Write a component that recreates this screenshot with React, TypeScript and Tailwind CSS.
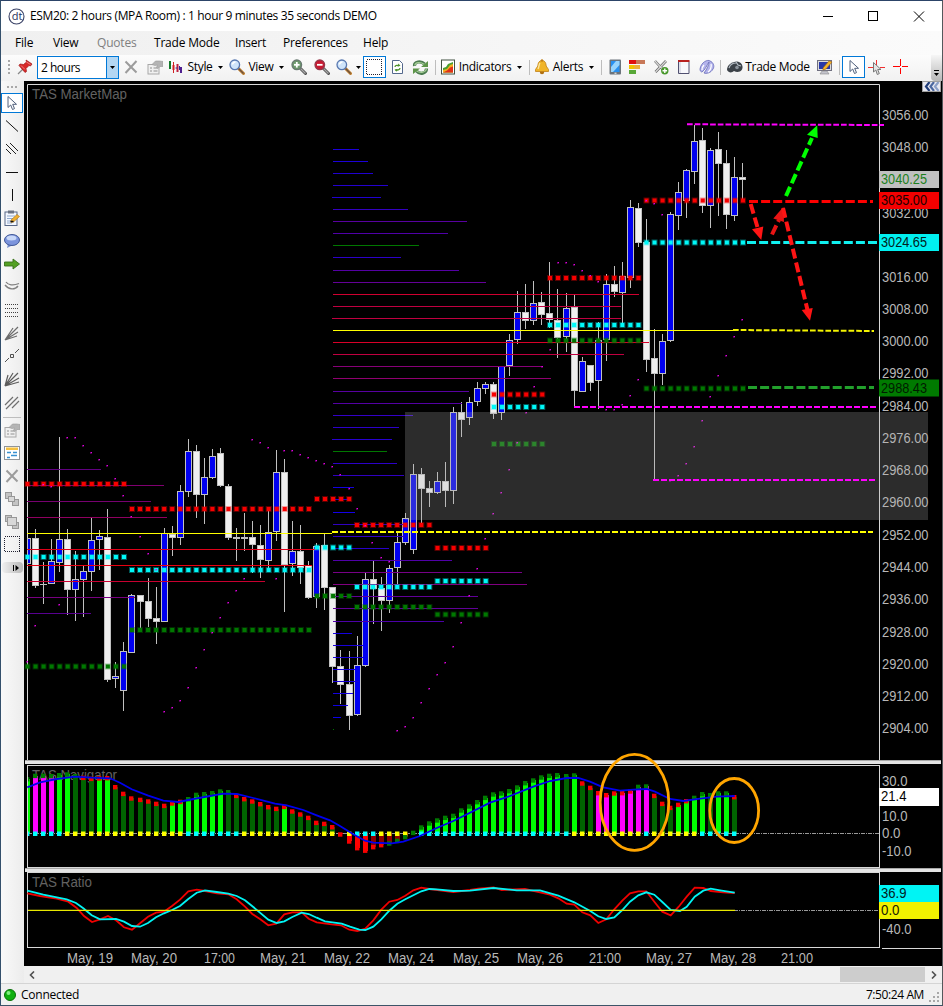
import React from 'react';
import { clsx } from 'clsx';

type Candle = [x: number, high: number, top: number, bottom: number, low: number, kind: 'b' | 'w'];

const UI_FONT = "font-['Open_Sans','Noto_Sans',sans-serif]";

const CANDLES: Candle[] = [
  [27, 538, 538, 564, 564, 'b'], [35, 529, 538, 586, 588, 'w'], [43, 562, 584, 585, 604, 'w'], [51, 539, 561, 584, 584, 'b'],
  [59, 437, 539, 563, 572, 'b'], [67, 529, 539, 590, 615, 'w'], [75, 551, 579, 590, 621, 'b'], [83, 566, 571, 580, 617, 'b'],
  [91, 518, 540, 572, 591, 'b'], [99, 530, 536, 540, 570, 'b'], [107, 509, 537, 680, 682, 'w'], [115, 662, 676, 679, 688, 'b'],
  [123, 642, 651, 691, 711, 'b'], [131, 594, 595, 653, 653, 'b'], [140, 595, 595, 602, 629, 'w'], [148, 578, 601, 619, 627, 'w'],
  [156, 587, 618, 622, 644, 'w'], [164, 528, 533, 622, 622, 'b'], [172, 526, 534, 538, 556, 'w'], [180, 485, 491, 538, 545, 'b'],
  [188, 439, 451, 492, 497, 'b'], [196, 445, 451, 495, 518, 'w'], [204, 458, 477, 495, 524, 'b'], [212, 449, 456, 478, 479, 'b'],
  [220, 448, 453, 486, 487, 'w'], [228, 484, 486, 538, 540, 'w'], [236, 528, 537, 539, 561, 'w'], [244, 513, 537, 539, 551, 'w'],
  [252, 521, 537, 545, 573, 'w'], [260, 525, 545, 560, 578, 'w'], [268, 511, 532, 561, 568, 'b'], [276, 450, 472, 532, 541, 'b'],
  [284, 459, 472, 565, 612, 'w'], [292, 521, 551, 564, 576, 'b'], [300, 525, 551, 568, 584, 'w'], [308, 561, 565, 598, 599, 'w'],
  [316, 543, 546, 597, 608, 'b'], [324, 534, 545, 588, 610, 'w'], [332, 587, 587, 667, 683, 'w'], [340, 650, 666, 685, 704, 'w'],
  [349, 651, 684, 716, 730, 'w'], [357, 636, 665, 715, 716, 'b'], [365, 573, 579, 666, 667, 'b'], [373, 561, 579, 589, 624, 'w'],
  [381, 577, 588, 601, 631, 'w'], [389, 565, 568, 601, 613, 'b'], [397, 533, 542, 568, 584, 'b'], [405, 513, 518, 543, 545, 'b'],
  [413, 464, 474, 550, 554, 'b'], [421, 468, 474, 489, 524, 'w'], [429, 481, 488, 493, 507, 'w'], [437, 472, 481, 493, 494, 'b'],
  [445, 462, 481, 491, 507, 'w'], [453, 407, 412, 491, 504, 'b'], [461, 402, 412, 420, 437, 'w'], [469, 397, 402, 418, 425, 'b'],
  [477, 382, 388, 402, 406, 'b'], [485, 382, 384, 389, 394, 'b'], [493, 382, 384, 414, 419, 'w'], [501, 366, 366, 413, 420, 'b'],
  [509, 334, 340, 366, 376, 'b'], [517, 291, 312, 340, 344, 'b'], [525, 284, 312, 321, 329, 'w'], [533, 281, 303, 321, 325, 'b'],
  [541, 292, 302, 315, 325, 'w'], [549, 262, 313, 320, 328, 'w'], [557, 289, 320, 338, 358, 'w'], [566, 293, 308, 337, 352, 'b'],
  [574, 295, 307, 391, 408, 'w'], [582, 357, 361, 392, 392, 'b'], [590, 365, 365, 383, 391, 'w'], [598, 322, 340, 381, 409, 'b'],
  [606, 274, 284, 340, 361, 'b'], [614, 266, 284, 292, 297, 'w'], [622, 262, 276, 293, 325, 'b'], [630, 200, 207, 278, 288, 'b'],
  [638, 203, 208, 243, 247, 'w'], [646, 219, 242, 360, 372, 'w'], [654, 329, 358, 374, 479, 'w'], [662, 334, 341, 374, 385, 'b'],
  [670, 212, 214, 341, 342, 'b'], [678, 182, 192, 216, 230, 'b'], [686, 169, 170, 201, 218, 'b'], [694, 125, 141, 172, 184, 'b'],
  [702, 128, 140, 206, 213, 'w'], [710, 148, 150, 206, 228, 'b'], [718, 132, 149, 164, 216, 'w'], [726, 150, 163, 215, 229, 'w'],
  [734, 157, 177, 216, 221, 'b'], [742, 163, 177, 180, 199, 'w'],
];

// volume profile rows: x1, x2, y, colour
const PROFILE: [number, number, number, string][] = [
  [27, 101, 469, '#600080'], [27, 164, 485, '#800070'], [27, 151, 501, '#780070'], [27, 167, 517, '#900060'],
  [27, 317, 549, '#e00018'], [27, 312, 565, '#e80010'], [27, 265, 581, '#c80030'], [27, 135, 597, '#780080'], [27, 91, 613, '#580090'],
  [333, 359, 149, '#1c00d8'], [333, 368, 161, '#1c00d8'], [333, 373, 173, '#2000d0'], [333, 388, 185, '#2400d0'],
  [332, 381, 197, '#2000d0'], [333, 408, 209, '#3400c0'], [333, 467, 221, '#5800a0'], [333, 448, 233, '#5000a8'],
  [333, 419, 245, '#007800'], [333, 401, 257, '#2c00c8'], [333, 459, 270, '#5400a4'], [333, 486, 282, '#640098'],
  [333, 639, 294, '#d00030'], [333, 621, 306, '#c00040'], [332, 621, 318, '#c00040'], [333, 649, 342, '#d80028'],
  [333, 624, 354, '#c00040'], [333, 543, 366, '#880078'], [333, 551, 378, '#900070'],
  [333, 469, 391, '#5800a0'], [333, 462, 403, '#5400a4'], [333, 413, 415, '#3400c8'], [333, 399, 427, '#2c00c8'],
  [332, 392, 439, '#2800d0'], [333, 387, 451, '#007800'], [333, 397, 463, '#2c00c8'], [333, 404, 475, '#3000c0'],
  [333, 354, 487, '#1400e0'], [333, 350, 499, '#1000e0'], [333, 355, 512, '#1400e8'], [333, 403, 524, '#3000c0'],
  [333, 405, 536, '#3000c0'], [333, 389, 548, '#2800c8'], [333, 452, 560, '#5000a8'], [333, 522, 572, '#780088'],
  [333, 527, 584, '#800080'], [333, 478, 596, '#600098'], [333, 478, 608, '#600098'], [333, 444, 621, '#4c00a8'],
  [333, 352, 633, '#1400e0'], [333, 363, 645, '#1800d8'], [333, 363, 657, '#1800d8'], [333, 355, 669, '#1400e0'],
  [333, 359, 681, '#1800d8'], [333, 353, 693, '#1400e0'], [333, 348, 705, '#1000e0'], [333, 341, 717, '#0c00e8'], [333, 334, 729, '#007800'],
];

// market map levels: first x, number of squares, y, colour
const RED = '#f80000';
const CYAN = '#00f8f8';
const GREEN = '#007800';
const LEVELS: [number, number, number, string][] = [
  [27.5, 13, 484, RED], [27.5, 13, 557, CYAN], [27.5, 13, 666.5, GREEN],
  [132, 23, 509, RED], [132, 23, 570, CYAN], [132, 23, 630, GREEN],
  [317, 5, 499, RED], [317, 5, 547.5, CYAN], [317, 5, 596, GREEN],
  [357, 10, 525, RED], [357, 10, 587, CYAN], [357, 10, 607, GREEN],
  [437.5, 7, 548, RED], [437.5, 7, 581, CYAN], [437.5, 7, 614.5, GREEN],
  [494, 7, 394.5, RED], [494, 7, 407, CYAN], [494, 7, 444, GREEN],
  [550, 12, 278, RED], [550, 12, 325, CYAN], [550, 12, 340.5, GREEN],
  [646.5, 13, 200.5, RED], [646.5, 13, 242.5, CYAN], [646.5, 13, 388.5, GREEN],
];

const SAR: [number, number][] = [
  [67, 437], [75, 437], [83, 445], [91, 452], [99, 459], [107, 465], [115, 478], [123, 495], [131, 516], [140, 536], [148, 553],
  [156, 569], [252, 439], [260, 442], [268, 447], [284, 450], [292, 450], [300, 454], [308, 457], [316, 460], [324, 463],
  [59, 604], [35, 625], [27, 661], [276, 578], [244, 578], [236, 590], [228, 602], [220, 617], [212, 632], [204, 649], [196, 667],
  [188, 687], [180, 700], [172, 707], [164, 711], [43, 484], [51, 486], [332, 466], [340, 474], [349, 488], [357, 508], [365, 525],
  [372, 542], [381, 557], [389, 561], [397, 730], [405, 726], [413, 717], [421, 702], [429, 688], [437, 674], [445, 662],
  [453, 646], [461, 622], [469, 595], [477, 568], [485, 538], [493, 513], [501, 492], [509, 469], [517, 442], [526, 412],
  [534, 386], [606, 409], [614, 409], [622, 404], [630, 395], [638, 379], [542, 366], [550, 349], [558, 262], [566, 262], [574, 264],
  [582, 270], [590, 275], [598, 281], [646, 200], [654, 203], [662, 214], [742, 319], [734, 336], [726, 355], [718, 375],
  [670, 480], [678, 475], [686, 463], [694, 446], [702, 420], [710, 396],
];

// y of the marker, then marker / bar / base colour codes
const NAVIGATOR: [number, string][] = [
  [779, 'gLc'], [775.7, 'gMc'], [775.7, 'gMc'], [776, 'gMc'], [775, 'gLc'], [774.3, 'gLy'], [776, 'gDy'], [777.7, 'rDy'],
  [778.7, 'rDy'], [778.3, 'rLy'], [778, 'rLy'], [787, 'rDy'], [793.7, 'rDy'], [798.3, 'rDy'], [799.7, 'rDy'], [801.3, 'rDy'],
  [803.7, 'rDy'], [805.7, 'rDy'], [803.3, 'rLy'], [801.7, 'rLy'], [799, 'gLc'], [794.7, 'gLc'], [794, 'gLc'], [793, 'gLc'],
  [791.3, 'gLc'], [792, 'gDc'], [795.7, 'rDc'], [799, 'rDy'], [801.3, 'rDy'], [804, 'rDy'], [807, 'rDy'], [808.7, 'rDy'],
  [806.7, 'rLy'], [811.3, 'rDy'], [814.3, 'rDy'], [817.7, 'rDy'], [822.7, 'rDy'], [823.7, 'rDy'], [827, 'rDy'], [834.3, 'rRn'],
  [841.3, 'rRy'], [848, 'rRc'], [850.5, 'rRc'], [847, 'rKc'], [845, 'rKy'], [843.3, 'gKy'], [840.7, 'gKy'], [837, 'gKy'],
  [832.7, 'gDn'], [827.3, 'gLc'], [823.3, 'gLc'], [820.3, 'gLc'], [817.7, 'gLc'], [815.7, 'gLc'], [810.3, 'gLc'], [806.3, 'gLc'],
  [802, 'gLc'], [797.7, 'gLc'], [794.3, 'gLc'], [793.3, 'gLc'], [791, 'gLc'], [787.3, 'gLc'], [783, 'gLc'], [780.3, 'gLc'],
  [777.3, 'gLc'], [775.7, 'gLc'], [775, 'gLc'], [776, 'gDc'], [775.3, 'gLy'], [783.3, 'rDy'], [787.7, 'rDy'], [793, 'rMy'],
  [795, 'rMy'], [793.3, 'rLy'], [793, 'rMy'], [791.3, 'rMy'], [786.7, 'gMy'], [786.3, 'gMc'], [795.7, 'rDy'], [803.7, 'rDy'],
  [807.7, 'rDy'], [804.7, 'rLy'], [801, 'rLy'], [797.7, 'gLy'], [794, 'gLc'], [795, 'gDc'], [793.3, 'gLc'], [793.3, 'gLc'], [797, 'rDc'],
];

const NAV_COLORS: Record<string, string> = {
  g: '#007c00', r: '#f80000', L: '#00ff00', D: '#006400', M: '#ff00ff', R: '#ff0000', K: '#8b0000', c: '#00ffff', y: '#ffff00', n: 'none',
};

const NAV_LINE =
  '27.3,787.3 40,782.3 56.7,779 75,776.7 91.7,777.7 110,778.3 120,782.7 131.7,789.3 148.3,795.7 163.3,800.7 178.3,802 193.3,799 210,796 223.3,793.7 236.7,794 253.3,798 275,803.7 286.7,805.3 303.3,810 316.7,815.3 330,820.3 340,826 353.3,834.3 365,840.7 373.3,842.7 391.7,843.3 403.3,841.7 420,836 436.7,828 453.3,821 470,812.7 490,802.7 510,796 533.3,786.7 550,781 566.7,778 578.3,778 590,781.7 603.3,787.3 620,790.7 633.3,789.7 646.7,789 655,791.7 670,799 683.3,801 700,798.7 716.7,796.7 734.7,796';

const RATIO_RED =
  '27.3,893.3 40,896 56.7,898.7 68.3,901.7 76.7,908 84,916 92,922 100,919.3 108,916 116,920.3 124,927.3 132,929.7 140,923.3 148,916.7 156,912.7 164,911.7 172,906 180,899.7 188.3,891.3 196.7,889.7 205,891 216.7,893.3 228.3,894.3 236.7,899.3 245,906.7 252.3,914 260.3,919.3 268.3,925.3 276.3,923.7 284.3,914.3 292.3,912.3 301.7,912.3 308.7,918.7 316.7,922.3 331.7,924.3 341,925.3 349.3,929.7 357.3,931 365.3,928.7 373.3,920.3 381.3,909.7 389.3,901.7 397.3,900 405.3,895.7 413.3,890.3 421.3,887.7 429.3,889 453.3,892 470,890 478.3,888.7 493.7,887.3 501.7,890 525,889 540,892.3 550,894.7 558.3,898.3 566.7,903.7 574.3,904.7 582.3,912.3 590.3,915.3 598.3,923 606.3,919.3 614.3,909.3 622.3,900.7 630,893.3 638.3,891.3 646.3,891.3 654.3,901.7 662.3,911.7 670.7,915.3 678.7,906.7 686.7,896.7 694.7,887.7 703.3,888 710.7,891 723.3,892.3 734.7,893';

const RATIO_CYAN =
  '27.3,890.7 43.3,894.7 66.7,899.3 76,903 83.3,908.3 91.7,915.3 100,919.3 116,919 124,921.7 132,926 140,926.7 148,923 156,917.3 164,913.3 172,910 180,906 188.3,899 196.7,892.7 205,890.3 216.7,892 228.3,893.7 236.7,896 245,900.3 253.3,907 268.3,919.7 276.7,923 284.3,921.3 292.3,917 301.7,912.7 308.7,914 316.7,917.7 325,921.3 341.7,923.7 350,926.7 359.3,929.7 365.3,930 373.3,926.7 381.3,919.3 389.3,910.7 397.3,903.7 405.3,899.3 421.3,891.3 429.3,889 436.7,889.3 453.3,891 470,890.7 493.3,888 516.7,890.3 540,890.3 558.3,895.7 574.3,902.3 590.3,911 598.3,916.3 606.3,919 614.3,917.3 622.3,910 630,901.7 638.3,895.3 646.3,892.3 654.3,894.7 662.3,902 670.7,910 680,911 686.7,906.7 694.7,896.7 703.3,890.7 710.7,888.7 720,890.3 734.7,892.7';

const PRICES: [string, number][] = [
  ['3056.00', 115], ['3048.00', 147], ['3032.00', 212.5], ['3016.00', 277], ['3008.00', 309], ['3000.00', 341], ['2992.00', 373],
  ['2984.00', 406], ['2976.00', 438], ['2968.00', 470], ['2960.00', 502], ['2952.00', 535], ['2944.00', 567], ['2936.00', 599],
  ['2928.00', 632], ['2920.00', 664], ['2912.00', 696], ['2904.00', 728],
];

const TIMES: [string, number, number][] = [
  ['May, 19', 67, 46], ['May, 20', 131, 46], ['17:00', 204, 31], ['May, 21', 260, 46], ['May, 22', 324, 46], ['May, 24', 388, 46],
  ['May, 25', 453, 46], ['May, 26', 517, 46], ['21:00', 589, 32], ['May, 27', 646, 46], ['May, 28', 710, 46], ['21:00', 781, 32],
];

/* ---------- chart primitives ---------- */

const Label = ({ x, y, w, fill = '#b8b8b8', children }: { x: number; y: number; w: number; fill?: string; children: string }) => (
  <text x={x} y={y + 5} textLength={w} lengthAdjust="spacingAndGlyphs" fontSize="14" fill={fill} fontFamily="Liberation Sans, sans-serif">
    {children}
  </text>
);

const Tag = ({ y, h = 17, w = 46, bg, fill, children }: { y: number; h?: number; w?: number; bg: string; fill: string; children: string }) => (
  <g>
    <rect x="879" y={y} width="60" height={h} fill={bg} />
    <Label x={881} y={y + 8} w={w} fill={fill}>{children}</Label>
  </g>
);

const Arrow = ({ from, to, head, color }: { from: [number, number]; to: [number, number]; head: string; color: string }) => (
  <g>
    <line x1={from[0]} y1={from[1]} x2={to[0]} y2={to[1]} stroke={color} strokeWidth="4" strokeDasharray="10 4" />
    <polygon points={head} fill={color} />
  </g>
);

const MarketMap = () => (
  <svg width="918" height="679" viewBox="24 81 918 679" className="block overflow-visible">
    <path d="M27.5 760V84.5H879.5V760" fill="none" stroke="#d8d8d8" />
    <Label x={32} y={94} w={95} fill="#626262">TAS MarketMap</Label>
    <g shapeRendering="crispEdges">
      {CANDLES.map(([x, high, top, bottom, low, kind]) => (
        <g key={x}>
          <rect x={x} y={high} width="1" height={low - high} fill="#c0c0c0" />
          <rect x={x === 27 ? 27 : x - 3} y={top} width={x === 27 ? 4 : 7} height={bottom - top} fill="#c0c0c0" />
          {bottom - top > 2 && (
            <rect
              x={x === 27 ? 28 : x - 2}
              y={top + 1}
              width={x === 27 ? 2 : 5}
              height={bottom - top - 2}
              fill={kind === 'b' ? '#0000f0' : '#f0f0f0'}
            />
          )}
        </g>
      ))}
      {PROFILE.map(([x1, x2, y, color]) => (
        <rect key={`${x1}-${y}`} x={x1} y={y} width={x2 - x1} height="1" fill={color} />
      ))}
      <rect x="27" y="533" width="305" height="1" fill="#ffff00" />
      <rect x="333" y="330" width="401" height="1" fill="#ffff00" />
    </g>
    {LEVELS.map(([x, count, y, color]) =>
      Array.from({ length: count }, (_, i) => (
        <g key={`${x}-${y}-${i}`} fill={color}>
          <rect x={x + i * 8.04 - 3} y={y - 3} width="6" height="6" opacity="0.35" />
          <rect x={x + i * 8.04 - 2} y={y - 2} width="4" height="4" />
        </g>
      ))
    )}
    {SAR.map(([x, y]) => (
      <g key={`${x}-${y}`} fill="#e000e0" shapeRendering="crispEdges">
        <rect x={x - 1} y={y} width="2" height="1" opacity="0.55" />
        <rect x={x} y={y} width="1" height="1" />
        <rect x={x - 1} y={y + 1} width="2" height="1" opacity="0.35" />
      </g>
    ))}

    {PRICES.map(([text, y]) => (
      <Label key={text} x={882} y={y} w={46.5}>{text}</Label>
    ))}
    <Tag y={171} bg="#c0c0c0" fill="#1c801c">3040.25</Tag>
    <Tag y={192} bg="#f40000" fill="#200000">3035.00</Tag>
    <Tag y={234} bg="#00f0f0" fill="#002020">3024.65</Tag>
    <Tag y={379.5} bg="#007a00" fill="#001c00">2988.43</Tag>

    {/* balance zone and key levels */}
    <rect x="405" y="412" width="523" height="108" fill="#aaaaaa" fillOpacity="0.26" />
    <g strokeWidth="2">
      <path d="M687 124.3L884 125" stroke="#ff00ff" strokeDasharray="5.7 2" />
      <path d="M574 407H876" stroke="#ff00ff" strokeDasharray="6 2" />
      <path d="M653 480H877" stroke="#ff00ff" strokeDasharray="6 2" />
      <path d="M332 532H873" stroke="#ffff00" strokeDasharray="6 2" />
      <path d="M733 330L874 331" stroke="#f4f400" strokeDasharray="5.7 2" />
    </g>
    <g strokeWidth="3">
      <path d="M749 201.5H873" stroke="#ff0000" strokeDasharray="9 3.1" />
      <path d="M747 242.5H879" stroke="#10f0f0" strokeDasharray="9 3.1" />
      <path d="M748 387.5H874" stroke="#22a02c" strokeDasharray="9 3.1" />
    </g>
    <Arrow from={[786, 196]} to={[812, 138]} head="817.2,125.3 807,134.7 817.7,138" color="#00ff00" />
    <Arrow from={[750.7, 204]} to={[758, 229]} head="761.3,240 752,229.3 763.3,226.5" color="#ff1414" />
    <Arrow from={[772, 234.5]} to={[779, 220]} head="783.3,207 773.3,218.5 784,222" color="#e81414" />
    <Arrow from={[783, 208]} to={[807.5, 310]} head="810,320.7 801.7,310 812.7,308" color="#ff1414" />
  </svg>
);

const Navigator = () => (
  <svg width="918" height="104" viewBox="24 764 918 104" className="relative z-10 block overflow-visible">
    <rect x="27.5" y="765.5" width="852" height="102" fill="none" stroke="#d8d8d8" />
    <Label x={32} y={775} w={85} fill="#626262">TAS Navigator</Label>
    <path d="M28 833.5H879" stroke="#989898" strokeDasharray="4 1 1 1" />
    {NAVIGATOR.map(([y, codes], i) => {
      const x = CANDLES[i][0];
      const left = i === 0 ? 28 : x - 2;
      const w = i === 0 ? 2 : 5;
      return (
        <g key={x}>
          <rect x={left} y={Math.min(y, 833)} width={w} height={Math.abs(833 - y)} fill={NAV_COLORS[codes[1]]} shapeRendering="crispEdges" />
          {codes[2] !== 'n' && <rect x={left} y="831.5" width={w - 0.6} height="4.5" fill={NAV_COLORS[codes[2]]} />}
          <rect x={left} y={y - 2} width={w - 0.6} height="4.4" fill={NAV_COLORS[codes[0]]} />
        </g>
      );
    })}
    <polyline points={NAV_LINE} fill="none" stroke="#0000ee" strokeWidth="1.8" />
    <Label x={882} y={781} w={25.5}>30.0</Label>
    <Tag y={788} h={18} w={25.5} bg="#ffffff" fill="#000000">21.4</Tag>
    <Label x={882} y={816} w={25.5}>10.0</Label>
    <Label x={882} y={833} w={18.5}>0.0</Label>
    <Label x={882} y={851} w={29.5}>-10.0</Label>
    <g fill="none" stroke="#ffa500" strokeWidth="2.8">
      <ellipse cx="634.5" cy="802.3" rx="34.3" ry="48" />
      <ellipse cx="734.2" cy="810.5" rx="24.4" ry="32" />
    </g>
  </svg>
);

const Ratio = () => (
  <svg width="918" height="77" viewBox="24 872 918 77" className="block overflow-visible">
    <rect x="27.5" y="872.5" width="852" height="75" fill="none" stroke="#d8d8d8" />
    <path d="M882 948.5H941" stroke="#d8d8d8" />
    <Label x={32} y={882} w={60} fill="#626262">TAS Ratio</Label>
    <path d="M734 910.5H879" stroke="#989898" strokeDasharray="4 1 1 1" />
    <polyline points={RATIO_RED} fill="none" stroke="#f00000" strokeWidth="1.8" />
    <polyline points={RATIO_CYAN} fill="none" stroke="#00f4f4" strokeWidth="1.8" />
    <path d="M28 910.4H735" stroke="#e8e800" strokeWidth="1.3" />
    <Tag y={885} w={25.5} bg="#00f4f4" fill="#002020">36.9</Tag>
    <Tag y={902} w={18.5} bg="#f2f200" fill="#202000">0.0</Tag>
    <Label x={882} y={929} w={29.5}>-40.0</Label>
  </svg>
);

const TimeAxis = () => (
  <svg width="918" height="17" viewBox="24 949 918 17" className="block overflow-visible">
    {TIMES.map(([text, x, w]) => (
      <Label key={x} x={x} y={958} w={w}>{text}</Label>
    ))}
  </svg>
);

const Splitter = () => <div className="ml-px h-1 w-[916px] border-t border-[#a8a8a8] bg-[#e4e4e4]" />;

/* ---------- icons ---------- */

const Icon = ({ children, w = 16, h = 16 }: { children: React.ReactNode; w?: number; h?: number }) => (
  <svg width={w} height={h} viewBox={`0 0 ${w} ${h}`} fill="none" className="block shrink-0">
    {children}
  </svg>
);

const PinIcon = () => (
  <Icon>
    <path d="M1 15L6 10" stroke="#888" strokeWidth="1.3" />
    <path d="M9 1l6 4-1.500 2-1.500-.5-3 3 .5 3-1.500 1L2 6.500l1-1.500 3.500.5 3-2.500z" fill="#d82828" stroke="#9c1818" strokeWidth=".7" />
    <path d="M9.500 3l4 2.500M4 6.500l4 4" stroke="#f08080" />
  </Icon>
);

const MagnifierIcon = ({ sign }: { sign?: 'plus' | 'minus' }) => (
  <Icon>
    <path d="M9.500 9.500l5 5" stroke={sign ? '#505050' : '#c08030'} strokeWidth="3" strokeLinecap="round" />
    <path d="M9.500 9.500l5 5" stroke={sign ? '#a8a8a8' : '#6a5040'} strokeWidth="1.2" />
    <circle
      cx="5.800"
      cy="5.800"
      r="4.800"
      fill={sign === 'plus' ? '#6c986c' : sign === 'minus' ? '#c81830' : '#cfe4fa'}
      stroke={sign === 'plus' ? '#687870' : sign === 'minus' ? '#94384a' : '#5878b0'}
      strokeWidth="1.3"
    />
    {sign && <path d="M3 5.800h5.600" stroke="#fff" strokeWidth="1.800" />}
    {sign === 'plus' && <path d="M5.800 3v5.600" stroke="#fff" strokeWidth="1.800" />}
    {!sign && <path d="M3.500 5.500a3 3 0 0 1 3-2.500" stroke="#fff" strokeWidth="1.500" />}
  </Icon>
);

const XIcon = () => (
  <Icon>
    <path d="M2.500 2.500l11 11M13.500 2l-11 12" stroke="#9c9c9c" strokeWidth="2" />
  </Icon>
);

const PropsIcon = () => (
  <Icon>
    <rect x="1" y="5.500" width="11" height="9.500" fill="#f0f0f0" stroke="#a8a8a8" />
    <path d="M3 9h2M3 12h2M6.500 9h4M6.500 12h4" stroke="#b0b0b0" strokeWidth="1.500" />
    <path d="M5 5.500l3.500-3.500h4l3.500.5v5h-3l-2 2-1.500-1 1-2.500-2.500.500z" fill="#b4b4b4" stroke="#989898" strokeWidth=".6" />
  </Icon>
);

const StyleIcon = () => (
  <Icon>
    <path d="M2 2v8" stroke="#107828" strokeWidth="2" />
    <path d="M5.500 3v11" stroke="#d02020" strokeWidth="1" />
    <path d="M5.500 6v5" stroke="#d02020" strokeWidth="2" />
    <path d="M9.500 5v8" stroke="#c02040" strokeWidth="2" />
    <path d="M13 8v6" stroke="#502090" strokeWidth="2" />
    <path d="M11.500 7v4M7.500 9h2" stroke="#303098" />
  </Icon>
);

const CursorIcon = () => (
  <Icon>
    <path d="M4 1.500v11l2.700-2.500 1.800 4.500 2-.9-1.800-4.300h3.800z" fill="#fff" stroke="#50607c" strokeWidth="1" />
  </Icon>
);

const MarqueeIcon = () => (
  <Icon w={17} h={17}>
    <rect x=".5" y=".5" width="15" height="15" stroke="#202030" strokeDasharray="1 1" shapeRendering="crispEdges" />
  </Icon>
);

const RefreshDocIcon = () => (
  <Icon>
    <path d="M3.500 1.500h7l3 3v10h-10z" fill="#fff" stroke="#54688c" />
    <path d="M6 8c0-2 3-2 4-1M11 9c0 2-3 2.500-4.500 1.500" stroke="#4c9028" strokeWidth="1.300" />
    <path d="M9.500 4.500l2 2.500-3 .3zM7.500 12.800l-2-2 3-.8z" fill="#4c9028" />
  </Icon>
);

const RefreshIcon = () => (
  <Icon w={17} h={17}>
    <path d="M2.500 7C2 2.500 9 1.500 12.500 5" stroke="#4c7c50" strokeWidth="3.200" />
    <path d="M14.500 9.500c0 5-6.500 6.500-10 2.500" stroke="#4c7c50" strokeWidth="3.200" />
    <path d="M2.800 6.500C3 3 8.500 2.500 12.500 5.500M14.500 9.500c-.5 4-6 5-10 2.500" stroke="#a4cc94" strokeWidth="1.200" />
    <path d="M9 8h7V2zM8 9.500H1V15z" fill="#5c9448" />
  </Icon>
);

const IndicatorsIcon = () => (
  <Icon>
    <rect x="1.500" y="1" width="13" height="14" fill="#fff" stroke="#405040" />
    <path d="M3 13.500V9l3-1 2-3 5-2v10.500z" fill="#4ca030" />
    <path d="M3 13.500V11l4-1 3-4 3-1v8.500z" fill="#f4b020" />
    <path d="M3 13.500l4-2 3-3 3-1v6z" fill="#e03018" />
  </Icon>
);

const BellIcon = () => (
  <Icon>
    <circle cx="8" cy="13" r="2.200" fill="#b07010" />
    <path d="M8 1.500c3 0 4 2.500 4.200 5.500l2.300 3.500v2h-13v-2L3.800 7C4 4 5 1.500 8 1.500z" fill="#f0b428" stroke="#c08018" strokeWidth=".8" />
    <path d="M6 4c-1 1-1 4-2 6" stroke="#fce8a0" strokeWidth="1.400" />
    <circle cx="8" cy="1.500" r="1.200" fill="#c08018" />
  </Icon>
);

const TabletIcon = () => (
  <Icon>
    <rect x="2.500" y=".5" width="11.500" height="15" rx="1" fill="#6c747c" />
    <rect x="4" y="2" width="8.500" height="11" fill="#2890f0" />
    <path d="M4 8L9 2h3.500v4L6 13H4z" fill="#98d4fc" />
    <path d="M7.500 14.200h2" stroke="#fff" />
  </Icon>
);

const HeatIcon = () => (
  <Icon>
    <rect y="1" width="16" height="4" fill="#c87858" />
    <rect y="1" width="7" height="4" fill="#e01010" />
    <rect y="6" width="11" height="4" fill="#ecb03c" />
    <rect y="6" width="5" height="4" fill="#f0c400" />
    <rect y="11" width="7" height="4" fill="#58a838" />
  </Icon>
);

const ToolsIcon = () => (
  <Icon>
    <path d="M2 2l10 11M2.500 13L13 2" stroke="#686868" strokeWidth="2.600" />
    <path d="M2 2l10 11M2.500 13L13 2" stroke="#d8d8d8" strokeWidth="1.200" />
    <circle cx="11.800" cy="11.800" r="3.700" fill="#48982c" />
    <path d="M9.500 11.800h4.600M11.800 9.500v4.600" stroke="#fff" strokeWidth="1.400" />
  </Icon>
);

const PageIcon = () => (
  <Icon>
    <path d="M2.500 2.500h10.500v12h-10.500z" fill="#f8f8fc" stroke="#505070" />
    <path d="M2 2h11.500" stroke="#b82020" strokeWidth="2" />
    <path d="M4 3v11" stroke="#c8c8d8" />
  </Icon>
);

const OrbIcon = () => (
  <Icon>
    <path d="M1 10C2 3 9 0 11 2c3 1 5 5 3 8-2 4-7 5-9 4 3-4 5-8 5-11-2 3-4 8-7 10-1 0-2-1-2-3z" fill="#b4b4ec" stroke="#6468b8" strokeWidth=".8" />
    <path d="M12 5c1 3-1 7-3 8M5 6c-2 2-2 4-2 5" stroke="#fff" strokeWidth="1.300" />
  </Icon>
);

const MouseIcon = () => (
  <Icon>
    <path d="M0 11C0 6 5 2.500 10 2.500c5 .5 6.500 5 5 8-2 3-5.500 3-8 1.500-2 2-5.500 2-7-1z" fill="#3c4248" />
    <path d="M2 9c1-3 4-5 7-5M9 3l2 3 3 1" stroke="#b8c0c8" strokeWidth="1.200" />
    <circle cx="10" cy="8.500" r="1.800" fill="#8c949c" />
  </Icon>
);

const MonitorIcon = () => (
  <Icon>
    <rect x=".5" y="1.500" width="14" height="10" fill="#dcdcdc" stroke="#707080" />
    <rect x="2" y="3" width="11" height="7" fill="#2838a8" />
    <path d="M6 9l6-7 3 1-6 7-3 1z" fill="#f4b428" stroke="#a06010" strokeWidth=".6" />
    <path d="M5 12h5l2 3H3z" fill="#c4c4cc" stroke="#888" strokeWidth=".6" />
  </Icon>
);

const CrossCursorIcon = () => (
  <Icon w={17} h={17}>
    <path d="M8.500 1v5M0 8.500h5M12 8.500h5" stroke="#f03030" shapeRendering="crispEdges" />
    <path d="M5.500 3.500v9.500l2.300-2 1.500 4.500 2-.9-1.600-4.100h3.300z" fill="#e4e4e4" stroke="#787878" />
  </Icon>
);

const CrossIcon = () => (
  <Icon>
    <path d="M7.500 0v6.500M7.500 8.500V15M0 7.500h6.500M8.500 7.500H15" stroke="#ff0000" shapeRendering="crispEdges" />
  </Icon>
);

const NoteIcon = () => (
  <Icon>
    <rect x="1" y="2" width="12" height="13.500" fill="#f4f8ff" stroke="#586888" />
    <rect x="4" y=".5" width="6" height="3" fill="#6c7484" />
    <path d="M3 6h8M3 8.500h6M3 11h7M3 13h5" stroke="#90a8cc" />
    <path d="M7 10l6-5.500 2.500 2L9.500 12 7 12.500z" fill="#f0b030" stroke="#a87018" strokeWidth=".6" />
    <path d="M6.500 11.500h3" stroke="#101010" strokeWidth="1.500" />
  </Icon>
);

const BubbleIcon = () => (
  <Icon>
    <path d="M4 11l-1 4 5-2.500z" fill="#7890d0" />
    <ellipse cx="8" cy="7" rx="7.500" ry="5.500" fill="#7c94dc" stroke="#405898" />
    <ellipse cx="7.500" cy="5" rx="5" ry="2.500" fill="#c8d8f8" />
  </Icon>
);

const ArrowIcon = () => (
  <Icon>
    <path d="M.5 6h8.500V3l6.500 5-6.500 5v-3H.5z" fill="#54a024" stroke="#387018" strokeWidth=".9" />
  </Icon>
);

const lineIcon = (d: string, color = '#101010', dash?: string, width = 1) => (
  <Icon>
    <path d={d} stroke={color} strokeDasharray={dash} strokeWidth={width} />
  </Icon>
);

const CardIcon = () => (
  <Icon>
    <rect x=".5" y="1.500" width="15" height="13" fill="#fff" stroke="#909498" />
    <rect x="2" y="2.500" width="12" height="2.500" fill="#f4c040" />
    <path d="M3 7.500h4M7 10.500h6M3 12.500h3M9 7.500h4" stroke="#3890d0" strokeWidth="1.500" />
  </Icon>
);

const BlocksIcon = ({ big }: { big?: boolean }) => (
  <Icon>
    <g fill="#c4c4c4" stroke="#989898">
      <rect x="1.500" y="1.500" width="6" height="6" />
      <rect x="8.500" y="8.500" width="6" height="6" />
      <rect x={big ? 3.5 : 4.5} y={big ? 3.5 : 5.5} width={big ? 9 : 6} height={big ? 8 : 5} fill="#d8d8d8" />
    </g>
  </Icon>
);

/* ---------- window chrome ---------- */

const Cell = ({ className, children }: { className: string; children?: React.ReactNode }) => (
  <div className={clsx('flex h-full shrink-0 items-center justify-center whitespace-nowrap', className)}>{children}</div>
);

const Caret = ({ className = 'w-3' }: { className?: string }) => (
  <Cell className={className}>
    <svg width="5" height="3" viewBox="0 0 5 3"><path d="M0 0h5L2.500 3z" fill="#000" /></svg>
  </Cell>
);

const Sep = () => <Cell className="w-[5px]"><div className="h-[15px] w-px bg-[#bdbdbd]" /></Cell>;

const TitleBar = () => (
  <div className="flex h-[30px] shrink-0 items-center bg-white">
    <svg width="17" height="17" viewBox="0 0 17 17" className="ml-[7px] shrink-0">
      <circle cx="8.500" cy="8.500" r="7.500" fill="#fff" stroke="#3c4468" strokeWidth="1.100" />
      <text x="3.800" y="12.300" fontSize="11" fill="#28305c" fontFamily="Open Sans, sans-serif">dt</text>
    </svg>
    <span className="ml-[5px] whitespace-nowrap tracking-[-0.35px]">ESM20: 2 hours (MPA Room) : 1 hour 9 minutes 35 seconds DEMO</span>
    <svg width="102" height="11" viewBox="0 0 102 11" fill="none" stroke="#000" className="mr-[17px] ml-auto shrink-0">
      <path d="M0 5.500h10" />
      <rect x="45.500" y=".5" width="9" height="9" />
      <path d="M91 .5l10 10M101 .5l-10 10" />
    </svg>
  </div>
);

const MenuBar = () => (
  <div className="flex h-6 shrink-0 items-center bg-gradient-to-r from-[#f0f0f0] to-[#fbfbfb] tracking-[-0.2px]">
    <span className="ml-[14px] w-[38px]">File</span>
    <span className="w-11">View</span>
    <span className="w-[57px] text-[#808080]">Quotes</span>
    <span className="w-[81px] whitespace-nowrap">Trade Mode</span>
    <span className="w-12">Insert</span>
    <span className="w-20">Preferences</span>
    <span>Help</span>
  </div>
);

const ToolBar = () => (
  <div className="flex h-[26px] shrink-0 items-center bg-gradient-to-b from-[#fcfcfc] to-[#f1f1f1] tracking-[-0.3px]">
    <div className="flex h-full items-center pb-[2px]">
      <Cell className="w-4">
        <svg width="2" height="15" viewBox="0 0 2 15" fill="#a8a8a8"><path d="M0 0h2v2H0zM0 4h2v2H0zM0 8h2v2H0zM0 12h2v2H0z" /></svg>
      </Cell>
      <Cell className="w-5 pr-1"><PinIcon /></Cell>
      <div className="mt-px flex h-[23px] w-[82px] shrink-0 border border-[#0078d7] bg-white">
        <span className="flex flex-1 items-center pl-[3px] whitespace-nowrap tracking-[-0.5px]">2 hours</span>
        <div className="h-full border-l border-[#0078d7] bg-[#b4d7f3]"><Caret className="w-[11px]" /></div>
      </div>
      <Cell className="w-6"><XIcon /></Cell>
      <Cell className="w-[23px]"><PropsIcon /></Cell>
      <Cell className="w-5"><StyleIcon /></Cell>
      <Cell className="w-7">Style</Cell>
      <Caret className="w-[13px]" />
      <Cell className="w-5"><MagnifierIcon /></Cell>
      <Cell className="w-[28px]">View</Cell>
      <Caret className="w-3" />
      <Cell className="w-[24px]"><MagnifierIcon sign="plus" /></Cell>
      <Cell className="w-[22px]"><MagnifierIcon sign="minus" /></Cell>
      <Cell className="w-[21px]"><MagnifierIcon /></Cell>
      <Caret className="w-[9px]" />
      <div className="flex h-[22px] w-[23px] shrink-0 items-center justify-center border border-[#0078d7] bg-white"><MarqueeIcon /></div>
      <Cell className="w-[21px]"><RefreshDocIcon /></Cell>
      <Cell className="w-[26px]"><RefreshIcon /></Cell>
      <Sep />
      <Cell className="w-5"><IndicatorsIcon /></Cell>
      <Cell className="w-[54px]">Indicators</Cell>
      <Caret className="w-[15px]" />
      <Sep />
      <Cell className="w-[20px]"><BellIcon /></Cell>
      <Cell className="w-8">Alerts</Cell>
      <Caret className="w-[15px]" />
      <Sep />
      <Cell className="w-[21px]"><TabletIcon /></Cell>
      <Cell className="w-[24px]"><HeatIcon /></Cell>
      <Cell className="w-[23px]"><ToolsIcon /></Cell>
      <Cell className="w-[24px]"><PageIcon /></Cell>
      <Cell className="w-[22px]"><OrbIcon /></Cell>
      <Sep />
      <Cell className="w-[23px]"><MouseIcon /></Cell>
      <Cell className="w-[63px]">Trade Mode</Cell>
      <Cell className="w-[28px] pl-1"><MonitorIcon /></Cell>
      <Sep />
      <div className="flex h-[22px] w-[23px] shrink-0 items-center justify-center border border-[#0078d7] bg-white"><CursorIcon /></div>
      <Cell className="w-[23px]"><CrossCursorIcon /></Cell>
      <Cell className="w-6 pl-px"><CrossIcon /></Cell>
    </div>
    <div className="ml-auto flex h-full w-[11px] items-end justify-center rounded-bl bg-gradient-to-b from-[#f6f6f6] to-[#b8b8b8] pb-[5px]">
      <svg width="5" height="6" viewBox="0 0 5 6"><path d="M0 0h5v1H0zM0 3h5L2.500 6z" fill="#000" /></svg>
    </div>
  </div>
);

const SideBar = () => {
  const drawTools = [
    lineIcon('M2 2.500L14 13.500'),
    lineIcon('M2 3l10 10M2 8l5 5M6 2l8 8', '#202020'),
    lineIcon('M2 8.500h12'),
    lineIcon('M8.500 2v12'),
    <NoteIcon />,
    <BubbleIcon />,
    <ArrowIcon />,
    lineIcon('M2 3c2 3 7 4 13 1.500M1 6c4 5 10 5 13 1', '#808080', undefined, 1.3),
    lineIcon('M1 2.500h14M1 6.500h14M1 10.500h14M1 14.500h14', '#404040', '1 1'),
    lineIcon('M1 15L14 2M1 15l13-8M1 15L9 3M1 15l12-4', '#6c6c6c', undefined, 1.2),
    lineIcon('M1 14l4-4M6.500 6.500h3v3h-3zM11 5l4-4', '#505050'),
    lineIcon('M1 15L14 2M1 15l14-8M1 15L9 2M1 15l14-4M1 15L4 4', '#5c5c5c', undefined, 1.2),
    lineIcon('M1 11l8-8M2 15L14 3M8 14l7-7', '#707070', undefined, 1.2),
  ];
  const editTools = [
    <PropsIcon />,
    <CardIcon />,
    <XIcon />,
    <BlocksIcon />,
    <BlocksIcon big />,
    <MarqueeIcon />,
  ];
  return (
    <div className="flex w-[23px] shrink-0 flex-col items-center bg-gradient-to-r from-[#f9f9f9] to-[#ececec] pr-px">
      <svg width="10" height="10" viewBox="0 0 10 10" className="shrink-0" fill="#a8a8a8"><path d="M0 5h2v2H0zM4 5h2v2H4zM8 5h2v2H8z" /></svg>
      <div className="mt-[2px] flex h-[20px] w-[22px] shrink-0 items-center justify-center border border-[#0078d7] bg-white"><CursorIcon /></div>
      <div className="mt-px">
        {drawTools.map((icon, i) => <div key={i} className="flex h-[23px] items-center">{icon}</div>)}
      </div>
      <div className="mt-[4px] h-px w-[18px] shrink-0 bg-[#bdbdbd]" />
      {editTools.map((icon, i) => <div key={i} className="flex h-[23px] shrink-0 items-center">{icon}</div>)}
      <div className="mt-[6px] flex h-[11px] w-[21px] shrink-0 items-center justify-end rounded bg-gradient-to-r from-[#f0f0f0] to-[#b8b8b8] pr-[4px]">
        <svg width="6" height="6" viewBox="0 0 6 6"><path d="M0 0h1v6H0zM2.500 0v6L6 3z" fill="#000" /></svg>
      </div>
    </div>
  );
};

const ScrollBar = () => (
  <div className="flex h-[17px] shrink-0 items-center bg-[#f0f0f0]">
    <svg width="6" height="8" viewBox="0 0 6 8" className="ml-[5px]" fill="none" stroke="#505050" strokeWidth="1.600"><path d="M5 .5L1.500 4 5 7.500" /></svg>
    <div className="ml-auto h-[15px] w-[85px] bg-[#cdcdcd]" />
    <svg width="6" height="8" viewBox="0 0 6 8" className="mr-[5px] ml-[6px]" fill="none" stroke="#505050" strokeWidth="1.600"><path d="M1 .5L4.500 4 1 7.500" /></svg>
  </div>
);

const StatusBar = () => (
  <div className="flex h-[22px] shrink-0 items-center border-t border-[#d4d4d4] bg-[#f0f0f0]">
    <svg width="12" height="12" viewBox="0 0 12 12" className="ml-[3px]">
      <circle cx="6" cy="6" r="5.500" fill="#10b010" stroke="#087008" />
      <circle cx="4.500" cy="4" r="2" fill="#80f080" />
    </svg>
    <span className="ml-[5px] tracking-[-0.25px]">Connected</span>
    <span className="ml-auto tracking-[-0.4px]">7:50:24 AM</span>
    <svg width="11" height="11" viewBox="0 0 11 11" className="mt-[5px] mr-[2px] ml-[5px]" fill="#a8a8a8">
      <path d="M8 0h2v2H8zM4 4h2v2H4zM8 4h2v2H8zM0 8h2v2H0zM4 8h2v2H4zM8 8h2v2H8z" />
    </svg>
  </div>
);

export default function App() {
  return (
    <div className={clsx('flex h-[1006px] w-[943px] flex-col overflow-hidden border border-t-[#2c4468] border-r-[#54585c] border-b-[#3c5468] border-l-[#34506c] bg-[#f0f0f0] text-[12px] leading-4 text-black', UI_FONT)}>
      <TitleBar />
      <MenuBar />
      <ToolBar />
      <div className="flex h-[902px] shrink-0">
        <SideBar />
        <div className="flex w-[918px] flex-col">
          <div className="relative h-[885px] bg-black">
            <MarketMap />
            <Splitter />
            <Navigator />
            <Splitter />
            <Ratio />
            <TimeAxis />
            <div className="absolute top-0 right-px flex h-[11px] w-[19px] items-center justify-center border border-[#a0a0a0] bg-[#e8e8f0]">
              <svg width="16" height="9" viewBox="0 0 16 9" fill="none" strokeWidth="2.200">
                <path d="M5.500 0L2 4.500 5.500 9" stroke="#203c78" />
                <path d="M10 0L6.500 4.500 10 9" stroke="#4c68a0" />
                <path d="M14.500 0L11 4.500 14.500 9" stroke="#8ca0c8" />
              </svg>
            </div>
          </div>
          <ScrollBar />
        </div>
      </div>
      <StatusBar />
    </div>
  );
}
